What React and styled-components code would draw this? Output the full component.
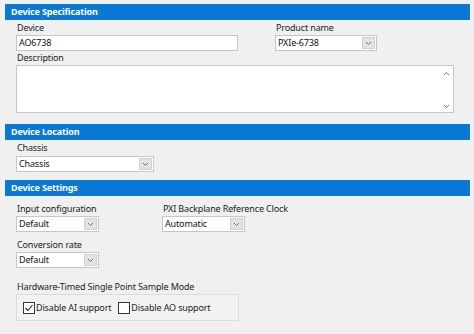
import React from 'react';
import styled, { createGlobalStyle } from 'styled-components';

const GlobalStyle = createGlobalStyle`
  html, body {
    margin: 0;
    padding: 0;
    background: #f0f0f0;
  }
  body {
    font-family: "Noto Sans", "Open Sans", sans-serif;
    font-size: 9px;
    letter-spacing: -0.15px;
    color: #1a1a1a;
  }
`;

const Page = styled.div`
  width: 474px;
  height: 334px;
  box-sizing: border-box;
  padding: 4px 4px 0 5px;
  background: #f0f0f0;
  overflow: hidden;
`;

const Section = styled.section`
  margin-top: ${(p) => p.$top || 0}px;
`;

const Header = styled.div`
  height: 16px;
  background: #0a78d5;
  color: #fff;
  font-weight: 700;
  font-size: 9px;
  line-height: 16px;
  padding-left: 6px;
`;

const Body = styled.div`
  padding-left: 11px;
`;

const Row = styled.div`
  display: flex;
  gap: ${(p) => p.$gap || 0}px;
`;

const Field = styled.div`
  display: flex;
  flex-direction: column;
`;

const Label = styled.div`
  height: ${(p) => p.$h || 15}px;
  line-height: ${(p) => p.$h || 15}px;
  margin-top: ${(p) => p.$top || 0}px;
  padding-left: 1px;
  color: #222;
  white-space: nowrap;
`;

const TextInput = styled.div`
  width: ${(p) => p.$w}px;
  height: 16px;
  box-sizing: border-box;
  border: 1px solid #c6c6c6;
  background: #fff;
  line-height: 14px;
  padding-left: 2px;
  color: #111;
`;

const SelectBox = styled.div`
  width: ${(p) => p.$w}px;
  height: 16px;
  box-sizing: border-box;
  border: 1px solid #c6c6c6;
  background: #fff;
  display: flex;
  align-items: stretch;
`;

const SelectValue = styled.div`
  flex: 1;
  line-height: 14px;
  padding-left: 2px;
  color: #111;
  white-space: nowrap;
  overflow: hidden;
`;

const ArrowButton = styled.div`
  width: 11px;
  margin: 1px;
  background: #e3e3e3;
  border: 1px solid #d0d0d0;
  display: flex;
  align-items: center;
  justify-content: center;
`;

const TextArea = styled.div`
  width: 438px;
  height: 48px;
  box-sizing: border-box;
  border: 1px solid #c6c6c6;
  background: #fff;
  display: flex;
  justify-content: flex-end;
`;

const ScrollBar = styled.div`
  width: 13px;
  display: flex;
  flex-direction: column;
  justify-content: space-between;
  align-items: center;
  padding: 5px 0 3px;
`;

const GroupBox = styled.div`
  width: 223px;
  height: 27px;
  box-sizing: border-box;
  border: 1px solid #dcdcdc;
  background: #f2f2f2;
  display: flex;
  align-items: center;
  gap: 7px;
  padding-left: 6px;
`;

const CheckLabel = styled.label`
  display: flex;
  align-items: center;
  gap: 1px;
  color: #222;
`;

const Box = styled.span`
  width: 12px;
  height: 12px;
  box-sizing: border-box;
  border: 1px solid #333;
  background: #fff;
  display: flex;
  align-items: center;
  justify-content: center;
`;

const Chevron = ({ up }) => (
  <svg width="7" height="5" viewBox="0 0 7 5">
    <path
      d={up ? 'M1 4 L3.5 1.5 L6 4' : 'M1 1 L3.5 3.5 L6 1'}
      fill="none"
      stroke="#707070"
      strokeWidth="1"
    />
  </svg>
);

const Select = ({ w, value }) => (
  <SelectBox $w={w}>
    <SelectValue>{value}</SelectValue>
    <ArrowButton>
      <Chevron />
    </ArrowButton>
  </SelectBox>
);

const Check = ({ checked, children }) => (
  <CheckLabel>
    <Box>
      {checked && (
        <svg width="10" height="10" viewBox="0 0 10 10">
          <path d="M1.5 5 L4 7.5 L8.5 2" fill="none" stroke="#222" strokeWidth="1.1" />
        </svg>
      )}
    </Box>
    {children}
  </CheckLabel>
);

export default function App() {
  return (
    <Page>
      <GlobalStyle />
      <Section>
        <Header>Device Specification</Header>
        <Body>
          <Row $gap={37}>
            <Field>
              <Label>Device</Label>
              <TextInput $w={222}>AO6738</TextInput>
            </Field>
            <Field>
              <Label>Product name</Label>
              <Select w={102} value="PXIe-6738" />
            </Field>
          </Row>
          <Label $h={14}>Description</Label>
          <TextArea>
            <ScrollBar>
              <Chevron up />
              <Chevron />
            </ScrollBar>
          </TextArea>
        </Body>
      </Section>

      <Section $top={11}>
        <Header>Device Location</Header>
        <Body>
          <Label $h={16}>Chassis</Label>
          <Select w={138} value="Chassis" />
        </Body>
      </Section>

      <Section $top={8}>
        <Header>Device Settings</Header>
        <Body>
          <Row $gap={63}>
            <Field>
              <Label $h={14} $top={6}>Input configuration</Label>
              <Select w={83} value="Default" />
            </Field>
            <Field>
              <Label $h={14} $top={6}>PXI Backplane Reference Clock</Label>
              <Select w={83} value="Automatic" />
            </Field>
          </Row>
          <Label $h={14} $top={6}>Conversion rate</Label>
          <Select w={83} value="Default" />
          <Label $h={14} $top={12}>Hardware-Timed Single Point Sample Mode</Label>
          <GroupBox>
            <Check checked>Disable AI support</Check>
            <Check>Disable AO support</Check>
          </GroupBox>
        </Body>
      </Section>
    </Page>
  );
}
